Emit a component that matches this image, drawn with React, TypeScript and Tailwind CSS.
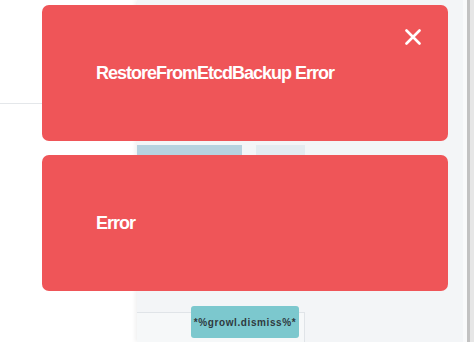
import React from "react";

export default function App() {
  return (
    <div className="relative w-[474px] h-[342px] overflow-hidden bg-white font-['Liberation_Sans',Arial,sans-serif]">
      <div className="flex h-full">
        <div className="w-[137px] h-full bg-white pt-[103px]">
          <div className="h-px bg-[#e4e7ea]" />
        </div>
        <div className="flex-1 h-full bg-[#f3f5f7] shadow-[-2px_0_4px_rgba(0,0,0,0.06)] flex flex-col">
          <div className="h-[145px]" />
          <div className="flex gap-[14px] h-[10px]">
            <div className="w-[105px] bg-[#b7d2df]" />
            <div className="w-[49px] bg-[#e3ebf0]" />
          </div>
          <div className="h-[157px]" />
          <div className="flex-1 w-[168px] border-t border-r border-[#e0e4e8] bg-[#f6f8f9]" />
        </div>
        <div className="w-[4px] h-full bg-[#f9fafb]" />
        <div className="w-[3px] h-full bg-[#c2c2c2]" />
        <div className="w-[4px] h-full bg-[#e6e6e6]" />
      </div>

      <div className="absolute left-[42px] top-[5px] w-[406px] flex flex-col items-center gap-[14px]">
        <div className="relative w-full h-[136px] rounded-[7px] bg-[#ef5558] flex items-center pl-[54px]">
          <span className="text-white font-bold text-[18px] tracking-[-1px] leading-none">
            RestoreFromEtcdBackup Error
          </span>
          <button className="absolute right-[27px] top-[24px] w-[16px] h-[16px] flex items-center justify-center">
            <svg viewBox="0 0 16 16" width="16" height="16">
              <path d="M1.5 1.5 L14.5 14.5 M14.5 1.5 L1.5 14.5" stroke="white" strokeWidth="2.6" strokeLinecap="round" />
            </svg>
          </button>
        </div>
        <div className="w-full h-[136px] rounded-[7px] bg-[#ef5558] flex items-center pl-[54px]">
          <span className="text-white font-bold text-[18px] tracking-[-1px] leading-none">Error</span>
        </div>
        <button className="mt-px w-[108px] h-[32px] rounded-[3px] bg-[#7cc8ce] text-[#2f3a3f] font-bold text-[10px] tracking-[0.6px] flex items-center justify-center">
          *%growl.dismiss%*
        </button>
      </div>
    </div>
  );
}
